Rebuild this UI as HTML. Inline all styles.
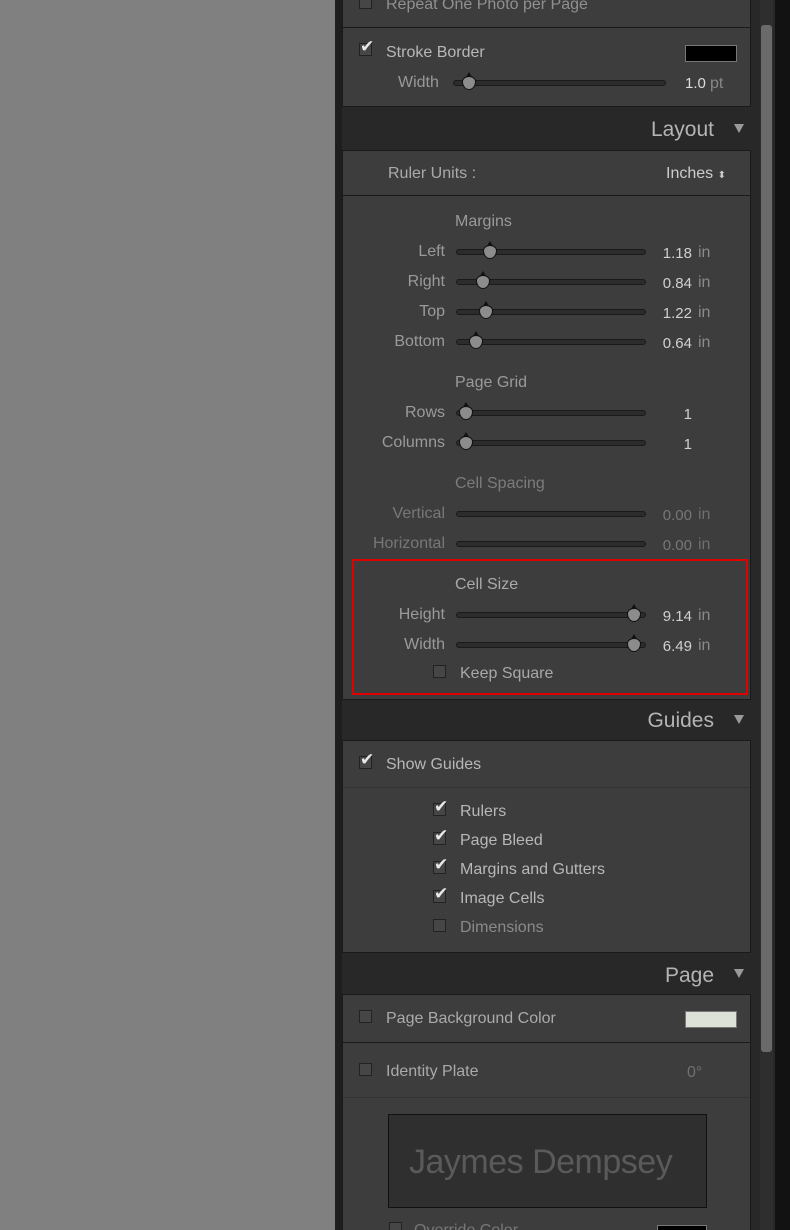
<!DOCTYPE html><html style="width:790px;height:1230px;overflow:hidden"><head><style>
body{margin:0;width:790px;height:1230px;background:#808080;position:relative;overflow:hidden;font-family:"Liberation Sans",sans-serif;}
.a{position:absolute}
.sec{position:absolute;left:342px;width:409px;background:#3d3d3d;border:1px solid #1a1a1a;box-sizing:border-box}
.hd{position:absolute;left:342px;width:410px;background:#282828}
.ht{position:absolute;right:76px;font-size:21px;color:#b4b4b4}
.tri{position:absolute;left:734px;width:0;height:0;border-left:5px solid transparent;border-right:5px solid transparent;border-top:9px solid #9a9a9a}
.t{position:absolute;font-size:16px;color:#b8b8b8;white-space:nowrap}
.lb{position:absolute;font-size:16px;color:#9a9a9a;text-align:right;width:120px;left:325px;white-space:nowrap}
.tr{position:absolute;left:456px;width:188px;height:4px;background:#2c2c2c;border:1px solid #1a1a1a;border-radius:3px}
.th{position:absolute;width:14px;height:14px;background:#8c8c8c;border:1px solid #111;border-radius:50% 50% 50% 50%/40% 40% 60% 60%;box-sizing:border-box}
.th:before{content:"";position:absolute;left:3px;top:-5px;border-left:3px solid transparent;border-right:3px solid transparent;border-bottom:5px solid #111}
.v{position:absolute;font-size:15px;color:#d0d0d0;text-align:right;width:60px;left:632px}
.u{position:absolute;font-size:16px;color:#8a8a8a;left:698px}
.cb{position:absolute;width:13px;height:13px;border:1px solid #222;background:#464646;box-sizing:border-box}
.ck{position:absolute;font-size:17px;color:#e8e8e8;line-height:1}
</style></head><body>
<div class="a" style="left:335px;top:0;width:455px;height:1230px;background:#282828"></div>
<div class="a" style="left:335px;top:0;width:7px;height:1230px;background:#1e1e1e"></div>
<div class="a" style="left:760px;top:0;width:13px;height:1230px;background:#2e2e2e"></div>
<div class="a" style="left:761px;top:25px;width:11px;height:1027px;background:#6a6a6a;border-radius:3px"></div>
<div class="a" style="left:775px;top:0;width:15px;height:1230px;background:#121212"></div>

<div class="sec" style="top:-2px;height:30px"></div>
<div class="cb" style="left:359px;top:-4px"></div>
<div class="t" style="left:386px;top:-4px;color:#909090">Repeat One Photo per Page</div>

<div class="sec" style="top:27px;height:80px"></div>
<div class="cb" style="left:359px;top:43px"></div><div class="ck" style="left:360px;top:38px">✔</div>
<div class="t" style="left:386px;top:44px">Stroke Border</div>
<div class="a" style="left:685px;top:45px;width:50px;height:15px;background:#000;border:1px solid #777"></div>
<div class="t" style="left:398px;top:74px;color:#999">Width</div>
<div class="tr" style="left:453px;width:211px;top:80px"></div><div class="th" style="left:462px;top:76px"></div>
<div class="t" style="left:685px;top:75px;font-size:15px;color:#ddd">1.0 <span style="color:#888;font-size:16px">pt</span></div>

<div class="hd" style="top:107px;height:43px"></div>
<div class="ht" style="top:118px">Layout</div><div class="tri" style="top:124px"></div>

<div class="sec" style="top:150px;height:46px"></div>
<div class="t" style="left:388px;top:165px;color:#aaa">Ruler Units :</div>
<div class="t" style="left:666px;top:165px;color:#ccc">Inches <span style="font-size:10px">⬍</span></div>

<div class="sec" style="top:195px;height:505px"></div>
<div class="t" style="left:455px;top:213px;color:#9a9a9a">Margins</div>
<div class="lb" style="top:243px">Left</div><div class="tr" style="top:249px"></div><div class="th" style="left:483px;top:245px"></div><div class="v" style="top:245px">1.18</div><div class="u" style="top:244px">in</div>
<div class="lb" style="top:273px">Right</div><div class="tr" style="top:279px"></div><div class="th" style="left:476px;top:275px"></div><div class="v" style="top:275px">0.84</div><div class="u" style="top:274px">in</div>
<div class="lb" style="top:303px">Top</div><div class="tr" style="top:309px"></div><div class="th" style="left:479px;top:305px"></div><div class="v" style="top:305px">1.22</div><div class="u" style="top:304px">in</div>
<div class="lb" style="top:333px">Bottom</div><div class="tr" style="top:339px"></div><div class="th" style="left:469px;top:335px"></div><div class="v" style="top:335px">0.64</div><div class="u" style="top:334px">in</div>

<div class="t" style="left:455px;top:374px;color:#9a9a9a">Page Grid</div>
<div class="lb" style="top:404px">Rows</div><div class="tr" style="top:410px"></div><div class="th" style="left:459px;top:406px"></div><div class="v" style="top:406px">1</div>
<div class="lb" style="top:434px">Columns</div><div class="tr" style="top:440px"></div><div class="th" style="left:459px;top:436px"></div><div class="v" style="top:436px">1</div>

<div class="t" style="left:455px;top:475px;color:#7c7c7c">Cell Spacing</div>
<div class="lb" style="top:505px;color:#777">Vertical</div><div class="tr" style="top:511px"></div><div class="v" style="top:507px;color:#777">0.00</div><div class="u" style="top:506px;color:#6e6e6e">in</div>
<div class="lb" style="top:535px;color:#777">Horizontal</div><div class="tr" style="top:541px"></div><div class="v" style="top:537px;color:#777">0.00</div><div class="u" style="top:536px;color:#6e6e6e">in</div>

<div class="a" style="left:352px;top:559px;width:396px;height:136px;border:2px solid #e00000;box-sizing:border-box"></div>
<div class="t" style="left:455px;top:576px;color:#aaa">Cell Size</div>
<div class="lb" style="top:606px">Height</div><div class="tr" style="top:612px"></div><div class="th" style="left:627px;top:608px"></div><div class="v" style="top:608px">9.14</div><div class="u" style="top:607px">in</div>
<div class="lb" style="top:636px">Width</div><div class="tr" style="top:642px"></div><div class="th" style="left:627px;top:638px"></div><div class="v" style="top:638px">6.49</div><div class="u" style="top:637px">in</div>
<div class="cb" style="left:433px;top:665px"></div><div class="t" style="left:460px;top:665px;color:#a8a8a8">Keep Square</div>

<div class="hd" style="top:700px;height:40px"></div>
<div class="ht" style="top:709px">Guides</div><div class="tri" style="top:715px"></div>

<div class="sec" style="top:740px;height:213px"></div>
<div class="a" style="left:343px;top:787px;width:407px;height:1px;background:#333"></div>
<div class="cb" style="left:359px;top:756px"></div><div class="ck" style="left:360px;top:751px">✔</div>
<div class="t" style="left:386px;top:756px">Show Guides</div>
<div class="cb" style="left:433px;top:803px"></div><div class="ck" style="left:434px;top:798px">✔</div><div class="t" style="left:460px;top:803px">Rulers</div>
<div class="cb" style="left:433px;top:832px"></div><div class="ck" style="left:434px;top:827px">✔</div><div class="t" style="left:460px;top:832px">Page Bleed</div>
<div class="cb" style="left:433px;top:861px"></div><div class="ck" style="left:434px;top:856px">✔</div><div class="t" style="left:460px;top:861px">Margins and Gutters</div>
<div class="cb" style="left:433px;top:890px"></div><div class="ck" style="left:434px;top:885px">✔</div><div class="t" style="left:460px;top:890px">Image Cells</div>
<div class="cb" style="left:433px;top:919px"></div><div class="t" style="left:460px;top:919px;color:#8a8a8a">Dimensions</div>

<div class="hd" style="top:953px;height:41px"></div>
<div class="ht" style="top:964px">Page</div><div class="tri" style="top:969px"></div>

<div class="sec" style="top:994px;height:49px"></div>
<div class="cb" style="left:359px;top:1010px"></div><div class="t" style="left:386px;top:1010px;color:#aaa">Page Background Color</div>
<div class="a" style="left:685px;top:1011px;width:50px;height:15px;background:#dde2d8;border:1px solid #777"></div>

<div class="sec" style="top:1042px;height:188px;border-bottom:none"></div>
<div class="a" style="left:343px;top:1097px;width:407px;height:1px;background:#333"></div>
<div class="cb" style="left:359px;top:1063px"></div><div class="t" style="left:386px;top:1063px;color:#aaa">Identity Plate</div>
<div class="t" style="left:687px;top:1064px;color:#707070">0°</div>
<div class="a" style="left:388px;top:1114px;width:319px;height:94px;background:#2f2f2f;border:1px solid #111;box-sizing:border-box"></div>
<div class="t" style="left:409px;top:1143px;font-size:34px;letter-spacing:-0.5px;color:#5a5a5a">Jaymes Dempsey</div>
<div class="cb" style="left:389px;top:1222px"></div><div class="t" style="left:414px;top:1222px;color:#777">Override Color</div>
<div class="a" style="left:657px;top:1225px;width:48px;height:10px;background:#000;border:1px solid #777"></div>
</body></html>
